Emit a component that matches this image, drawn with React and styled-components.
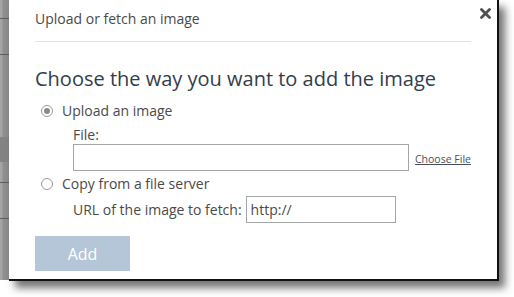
import styled, { createGlobalStyle } from "styled-components";

const GlobalStyle = createGlobalStyle`
  html, body {
    margin: 0;
    padding: 0;
    background: #ffffff;
  }
  body {
    font-family: "Open Sans", "Liberation Sans", sans-serif;
  }
`;

const Page = styled.div`
  width: 514px;
  height: 297px;
  display: flex;
  align-items: flex-start;
  overflow: hidden;
  background: #ffffff;
`;

const Backdrop = styled.div`
  width: 9px;
  height: 280px;
  flex-shrink: 0;
  background-color: #8f8f8f;
  background-image:
    linear-gradient(to bottom, transparent 18px, #5e5e5e 18px, #5e5e5e 19px, transparent 19px),
    linear-gradient(to bottom, transparent 54px, #5e5e5e 54px, #5e5e5e 55px, transparent 55px),
    linear-gradient(to bottom, transparent 137px, #848484 137px, #848484 162px, transparent 162px),
    linear-gradient(to bottom, transparent 182px, #5e5e5e 182px, #5e5e5e 183px, transparent 183px),
    linear-gradient(to bottom, transparent 218px, #5e5e5e 218px, #5e5e5e 219px, transparent 219px),
    linear-gradient(to right, #a4a4a4 0, #a4a4a4 2px, #909090 3px, #8a8a8a 100%);
`;

const Dialog = styled.div`
  position: relative;
  width: 490px;
  height: 281px;
  flex-shrink: 0;
  box-sizing: border-box;
  background: #ffffff;
  border-right: 2px solid #111111;
  border-bottom: 2px solid #111111;
  box-shadow: 6px 7px 8px rgba(0, 0, 0, 0.55);
  padding: 0 26px;
  display: flex;
  flex-direction: column;
  align-items: flex-start;
`;

const CloseButton = styled.button`
  position: absolute;
  top: 6px;
  right: 5px;
  width: 14px;
  height: 14px;
  padding: 0;
  border: 0;
  background: transparent;
  display: flex;
  align-items: center;
  justify-content: center;
  cursor: pointer;
`;

const Title = styled.div`
  align-self: stretch;
  font-size: 14px;
  line-height: 20px;
  color: #4a4a4a;
  padding-top: 9px;
  padding-bottom: 12px;
  border-bottom: 1px solid #e2e2e2;
`;

const Heading = styled.h2`
  margin: 24px 0 0 0;
  font-size: 20px;
  line-height: 26px;
  font-weight: 400;
  color: #333d4b;
`;

const Option = styled.label`
  display: flex;
  align-items: center;
  gap: 9px;
  margin-top: ${(p) => p.$top}px;
  margin-left: 6px;
  font-size: 14px;
  line-height: 20px;
  color: #4a4a4a;
`;

const Radio = styled.span`
  width: 12px;
  height: 12px;
  box-sizing: border-box;
  border-radius: 50%;
  border: 1.5px solid #9a9a9a;
  display: flex;
  align-items: center;
  justify-content: center;

  &::after {
    content: "";
    width: 6px;
    height: 6px;
    border-radius: 50%;
    background: ${(p) => (p.$checked ? "#8a8a8a" : "transparent")};
  }
`;

const Indent = styled.div`
  margin-left: 38px;
  display: flex;
  flex-direction: column;
`;

const FieldLabel = styled.div`
  font-size: 14px;
  line-height: ${(p) => p.$lh || 20}px;
  color: #4a4a4a;
  white-space: nowrap;
  margin-top: ${(p) => p.$top || 0}px;
`;

const FileRow = styled.div`
  display: flex;
  align-items: center;
  gap: 6px;
  margin-top: 1px;
`;

const TextBox = styled.div`
  width: ${(p) => p.$width}px;
  height: 27px;
  flex-shrink: 0;
  box-sizing: border-box;
  border: 1px solid #a3a7a7;
  background: #ffffff;
  font-size: 14px;
  line-height: 25px;
  padding-left: 4px;
  color: #4a4a4a;
`;

const ChooseFile = styled.span`
  font-size: 10.5px;
  color: #4b4f55;
  text-decoration: underline;
  white-space: nowrap;
  padding-top: 3px;
`;

const UrlRow = styled.div`
  display: flex;
  align-items: center;
  gap: 4px;
  margin-top: 2px;
  margin-left: 38px;
`;

const AddButton = styled.button`
  width: 95px;
  height: 35px;
  margin-top: 13px;
  border: 0;
  background: #b4c6d7;
  color: #ffffff;
  font-family: "Open Sans", "Liberation Sans", sans-serif;
  font-size: 16px;
  padding: 0;
`;

export default function App() {
  return (
    <>
      <GlobalStyle />
      <Page>
        <Backdrop />
        <Dialog>
          <CloseButton aria-label="Close">
            <svg width="11" height="11" viewBox="0 0 11 11">
              <path
                d="M1.5 1.5 L9.5 9.5 M9.5 1.5 L1.5 9.5"
                stroke="#4f4f4f"
                strokeWidth="2.8"
                strokeLinecap="round"
              />
            </svg>
          </CloseButton>
          <Title>Upload or fetch an image</Title>
          <Heading>Choose the way you want to add the image</Heading>
          <Option $top={9}>
            <Radio $checked />
            Upload an image
          </Option>
          <Indent>
            <FieldLabel $top={6} $lh={16}>File:</FieldLabel>
            <FileRow>
              <TextBox $width={336} />
              <ChooseFile>Choose File</ChooseFile>
            </FileRow>
          </Indent>
          <Option $top={3}>
            <Radio />
            Copy from a file server
          </Option>
          <UrlRow>
            <FieldLabel>URL of the image to fetch:</FieldLabel>
            <TextBox $width={150}>http://</TextBox>
          </UrlRow>
          <AddButton>Add</AddButton>
        </Dialog>
      </Page>
    </>
  );
}
